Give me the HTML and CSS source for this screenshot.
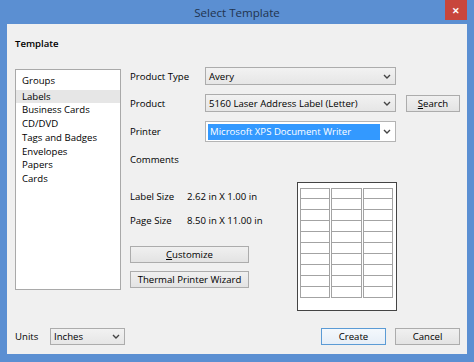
FILE: index.html
```html
<!DOCTYPE html>
<html lang="en">
<head>
    <meta charset="UTF-8">
    <title>Select Template</title>
    <link rel="stylesheet" href="styles.css">
</head>
<body>
    <div class="window">
        <div class="titlebar">
            <span class="title">Select Template</span>
            <span class="close">&#x2715;</span>
        </div>
        <div class="client">
            <div class="heading">Template</div>
            <div class="main">
                <ul class="groups">
                    <li class="group-head">Groups</li>
                    <li class="selected">Labels</li>
                    <li>Business Cards</li>
                    <li>CD/DVD</li>
                    <li>Tags and Badges</li>
                    <li>Envelopes</li>
                    <li>Papers</li>
                    <li>Cards</li>
                </ul>
                <div class="panel">
                    <div class="row">
                        <span class="label">Product Type</span>
                        <div class="combo">
                            <span>Avery</span>
                            <svg class="chev" width="8" height="5" viewBox="0 0 8 5"><polyline points="1,1 4,4 7,1" fill="none" stroke="#444" stroke-width="1.4"/></svg>
                        </div>
                    </div>
                    <div class="row">
                        <span class="label">Product</span>
                        <div class="combo">
                            <span>5160 Laser Address Label (Letter)</span>
                            <svg class="chev" width="8" height="5" viewBox="0 0 8 5"><polyline points="1,1 4,4 7,1" fill="none" stroke="#444" stroke-width="1.4"/></svg>
                        </div>
                        <button class="btn search"><u>S</u>earch</button>
                    </div>
                    <div class="row">
                        <span class="label">Printer</span>
                        <div class="combo edit">
                            <span class="sel">Microsoft XPS Document Writer</span>
                            <svg class="chev" width="8" height="5" viewBox="0 0 8 5"><polyline points="1,1 4,4 7,1" fill="none" stroke="#444" stroke-width="1.4"/></svg>
                        </div>
                    </div>
                    <div class="comments">Comments</div>
                    <div class="lower">
                        <div class="info">
                            <div class="info-row"><span class="info-key">Label Size</span><span>2.62 in X 1.00 in</span></div>
                            <div class="info-row"><span class="info-key">Page Size</span><span>8.50 in X 11.00 in</span></div>
                            <button class="btn wide customize"><u>C</u>ustomize</button>
                            <button class="btn wide">Thermal Printer Wizard</button>
                        </div>
                        <div class="preview">
                            <div class="sheet">
                                <i></i><i></i><i></i><i></i><i></i><i></i><i></i><i></i><i></i><i></i>
                                <i></i><i></i><i></i><i></i><i></i><i></i><i></i><i></i><i></i><i></i>
                                <i></i><i></i><i></i><i></i><i></i><i></i><i></i><i></i><i></i><i></i>
                            </div>
                        </div>
                    </div>
                </div>
            </div>
            <div class="bottom">
                <span class="units-label">Units</span>
                <div class="combo units">
                    <span>Inches</span>
                    <svg class="chev" width="8" height="5" viewBox="0 0 8 5"><polyline points="1,1 4,4 7,1" fill="none" stroke="#444" stroke-width="1.4"/></svg>
                </div>
                <div class="actions">
                    <button class="btn default">Create</button>
                    <button class="btn">Cancel</button>
                </div>
            </div>
        </div>
    </div>
</body>
</html>
```

FILE: styles.css
```css
body {
    margin: 0;
    background-color: #5b8fd2;
    font-family: "Open Sans", "Noto Sans", sans-serif;
    font-size: 9.6px;
    color: #000;
}
.window {
    width: 474px;
    height: 362px;
}
.titlebar {
    height: 24px;
    display: flex;
    justify-content: center;
    align-items: center;
    position: relative;
}
.title {
    font-size: 11.6px;
    color: #22344f;
}
.close {
    position: absolute;
    top: 0;
    right: 7px;
    width: 22px;
    height: 20px;
    background-color: #c8463c;
    color: white;
    font-size: 9px;
    font-weight: bold;
    display: flex;
    justify-content: center;
    align-items: center;
}
.client {
    margin: 0 7px;
    height: 330px;
    background-color: #f0f0f0;
    padding: 0 7px 0 8px;
    box-sizing: border-box;
    display: flex;
    flex-direction: column;
}
.heading {
    margin-top: 13px;
    height: 14px;
    line-height: 14px;
    font-weight: 600;
}
.main {
    margin-top: 16px;
    display: flex;
    height: 244px;
}
.groups {
    list-style: none;
    margin: 2px 0 0 0;
    padding: 4px 0 0 0;
    width: 106px;
    height: 221px;
    box-sizing: border-box;
    border: 1px solid #a9a9a9;
    background-color: white;
}
.groups li {
    line-height: 13.7px;
    padding-left: 6px;
}
.groups .group-head {
    margin-bottom: 2px;
}
.groups .selected {
    background-color: #e6e6e6;
}
.panel {
    margin-left: 9px;
    flex: 1;
}
.row {
    display: flex;
    align-items: center;
    margin-bottom: 9px;
}
.label {
    width: 75px;
}
.combo {
    width: 191px;
    height: 18px;
    box-sizing: border-box;
    border: 1px solid #acacac;
    background: linear-gradient(#f2f2f2, #e6e6e6);
    display: flex;
    align-items: center;
    justify-content: space-between;
    padding: 0 4px 0 3px;
}
.chev {
    flex-shrink: 0;
}
.combo.edit {
    height: 21px;
    background: white;
    border-color: #b4b4b4;
    padding-left: 2px;
}
.sel {
    background-color: #3399ff;
    color: white;
    width: 172px;
    height: 16px;
    line-height: 16px;
    padding-left: 2px;
    box-sizing: border-box;
}
.btn {
    font-family: inherit;
    font-size: inherit;
    color: inherit;
    height: 17px;
    padding: 0;
    border: 1px solid #acacac;
    background: linear-gradient(#f0f0f0, #e3e3e3);
}
.search {
    width: 54px;
    margin-left: 10px;
}
.comments {
    margin-top: 11px;
    line-height: 14px;
}
.lower {
    display: flex;
    margin-top: 15px;
}
.info {
    width: 167px;
    display: flex;
    flex-direction: column;
    align-items: flex-start;
}
.info-row {
    line-height: 14px;
    margin-top: 8px;
    margin-bottom: 2px;
}
.info-key {
    display: inline-block;
    width: 57px;
}
.wide {
    width: 119px;
    margin-top: 8px;
}
.customize {
    margin-top: 16px;
}
.preview {
    width: 100px;
    height: 129px;
    box-sizing: border-box;
    border: 1px solid #444;
    background-color: white;
    padding: 5px 0 0 2px;
}
.sheet {
    width: 93px;
    display: grid;
    grid-template-columns: repeat(3, 1fr);
    grid-auto-flow: column;
    grid-template-rows: repeat(10, 11px);
    column-gap: 1px;
}
.sheet i {
    border: 1px solid #a3a3a3;
    margin-top: -1px;
}
.sheet i:nth-child(10n+1) {
    margin-top: 0;
}
.bottom {
    margin-top: 17px;
    display: flex;
    align-items: center;
}
.units-label {
    width: 35px;
}
.combo.units {
    width: 75px;
    height: 17px;
}
.actions {
    margin-left: auto;
    display: flex;
    gap: 9px;
}
.actions .btn {
    width: 65px;
    height: 17px;
}
.btn.default {
    border-color: #5b9bd5;
    background: linear-gradient(#f4f8fc, #e6eef7);
}
```
